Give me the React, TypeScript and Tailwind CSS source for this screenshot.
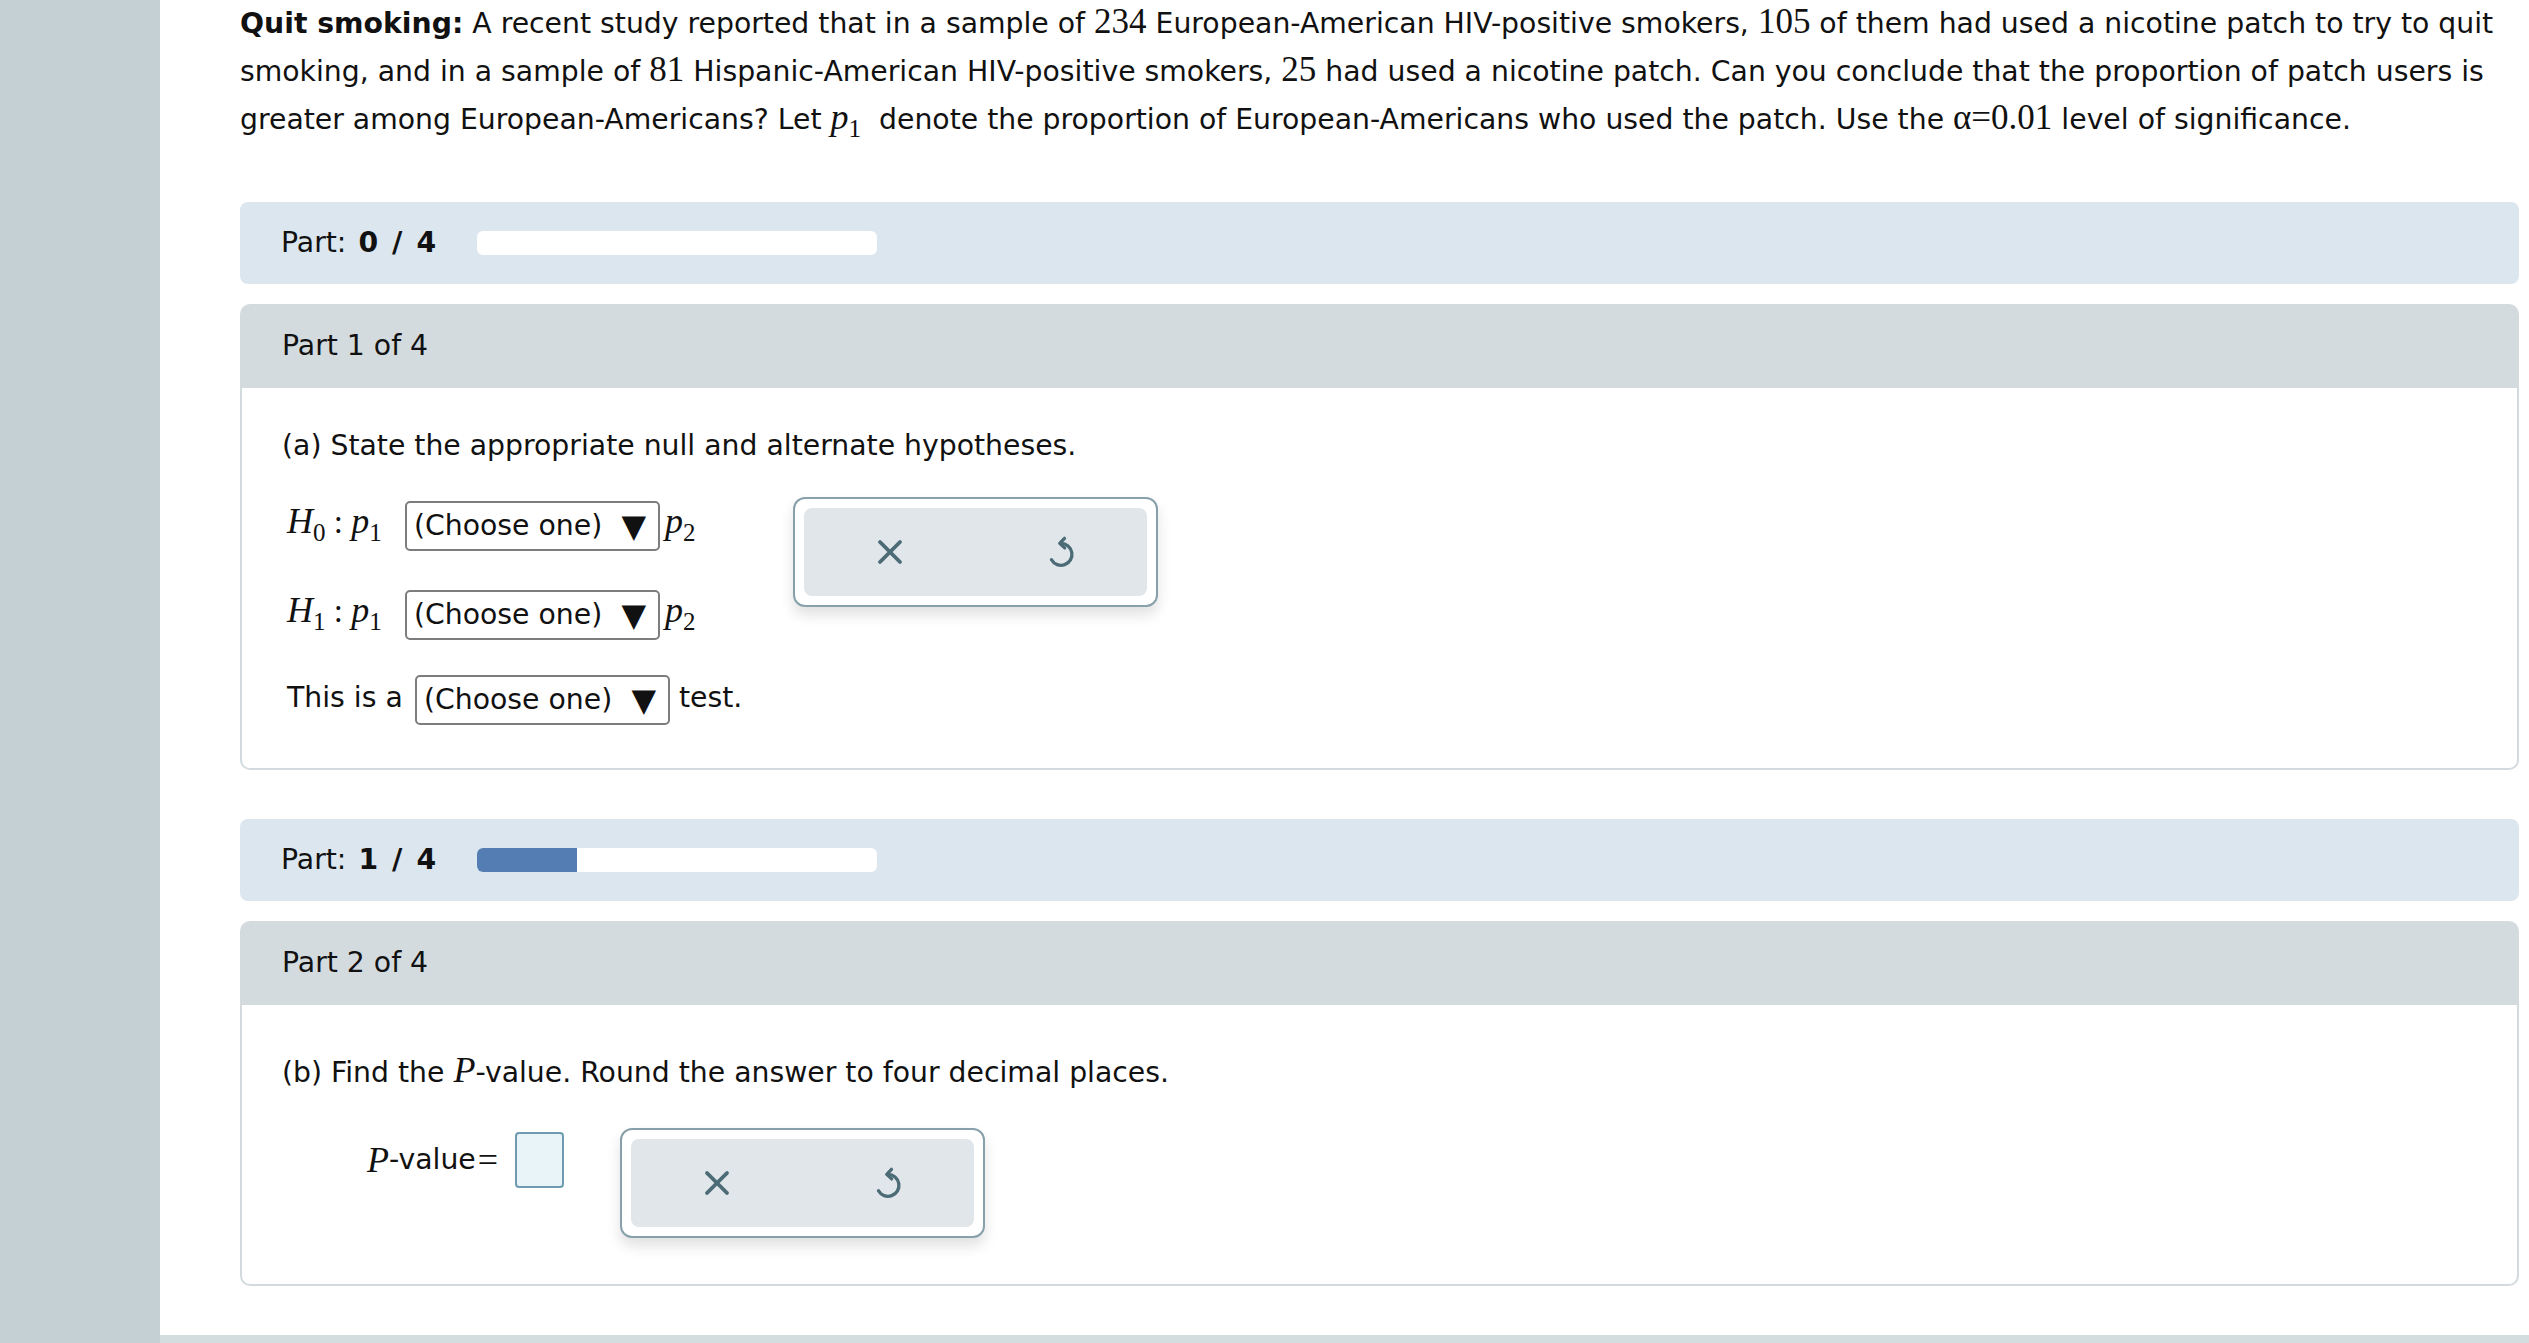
import React from "react";
import { X } from "lucide-react";

const M = ({ children }: { children: React.ReactNode }) => (
  <span className="font-['Liberation_Serif',serif] text-[35px] leading-none">{children}</span>
);

const MI = ({ children, sub }: { children: React.ReactNode; sub?: string }) => (
  <span className="font-['Liberation_Serif',serif] text-[36px] italic leading-none">
    {children}
    {sub && <span className="relative top-[8px] text-[25px] not-italic">{sub}</span>}
  </span>
);

const UndoIcon = () => (
  <svg width="38" height="38" viewBox="0 0 24 24" fill="none" stroke="#4b6b77" strokeWidth="2.1" strokeLinecap="round" strokeLinejoin="round">
    <path d="M12 6.6 A6.9 6.9 0 1 1 6 16.9" />
    <path d="M14.2 3.4 L11.2 6.5 L14.3 9.4" />
  </svg>
);

const CheckBox = () => (
  <div className="h-[110px] w-[365px] shrink-0 rounded-[12px] border-2 border-[#87a0a9] bg-white p-[9px] shadow-[0_8px_14px_rgba(0,0,0,0.12)]">
    <div className="flex h-full rounded-[8px] bg-[#e0e6e9]">
      <div className="flex flex-1 items-center justify-center">
        <X size={40} strokeWidth={2.3} color="#4b6b77" />
      </div>
      <div className="flex flex-1 items-center justify-center">
        <UndoIcon />
      </div>
    </div>
  </div>
);

const Select = () => (
  <div className="mt-[3px] flex h-[50px] w-[255px] shrink-0 items-center justify-between rounded-[5px] border-2 border-[#7d7d7d] bg-white pl-[7px] pr-[12px] leading-none">
    <span>(Choose one)</span>
    <span className="text-[32px]">▼</span>
  </div>
);

const PartBar = ({ n }: { n: number }) => (
  <div className="flex h-[82px] items-center rounded-[8px] bg-[#dce6ef] pl-[41px]">
    <div className="w-[196px]">
      Part:{" "}
      <span className="ml-[3px] font-bold">
        {n}
        <span className="mx-[14px]">/</span>4
      </span>
    </div>
    <div className="h-[24px] w-[400px] overflow-hidden rounded-[6px] bg-white">
      {n > 0 && <div className="h-full w-[100px] bg-[#547db4]" />}
    </div>
  </div>
);

const CardHeader = ({ label }: { label: string }) => (
  <div className="flex h-[84px] items-center rounded-t-[10px] bg-[#d3dbdf] pl-[42px]">{label}</div>
);

const Colon = () => (
  <span className="font-['Liberation_Serif',serif] text-[33px] leading-none">&nbsp;:&nbsp;</span>
);

export default function App() {
  return (
    <div className="flex h-[1343px] w-full overflow-hidden bg-white font-['DejaVu_Sans',Verdana,sans-serif] text-[28.3px] text-[#111]">
      <aside className="w-[160px] shrink-0 bg-[#c5d0d5]" />
      <main className="flex flex-1 flex-col">
        <div className="pl-[80px] pr-[10px]">
          <div className="whitespace-nowrap leading-[48px]">
            <div className="h-[48px]">
              <span className="font-bold">Quit smoking:</span> A recent study reported that in a sample of <M>234</M>{" "}
              European-American HIV-positive smokers, <M>105</M> of them had used a nicotine patch to try to quit
            </div>
            <div className="h-[48px]">
              smoking, and in a sample of <M>81</M> Hispanic-American HIV-positive smokers, <M>25</M> had used a nicotine
              patch. Can you conclude that the proportion of patch users is
            </div>
            <div className="h-[48px]">
              greater among European-Americans? Let <MI sub="1">p</MI>&nbsp; denote the proportion of European-Americans who
              used the patch. Use the <M>α=0.01</M> level of significance.
            </div>
          </div>

          <div className="mt-[58px]">
            <PartBar n={0} />
          </div>

          <div className="mt-[20px]">
            <CardHeader label="Part 1 of 4" />
            <div className="rounded-b-[10px] border-2 border-t-0 border-[#d3dbdf] bg-white pb-[43px] pl-[40px] pt-[34px]">
              <div className="h-[48px] leading-[48px]">(a) State the appropriate null and alternate hypotheses.</div>
              <div className="mt-[28px] flex items-start">
                <div className="w-[511px] shrink-0">
                  <div className="flex h-[53px] items-center">
                    <div className="w-[123px] pl-[5px]">
                      <MI sub="0">H</MI>
                      <Colon />
                      <MI sub="1">p</MI>
                    </div>
                    <Select />
                    <span className="ml-[5px]">
                      <MI sub="2">p</MI>
                    </span>
                  </div>
                  <div className="mt-[36px] flex h-[53px] items-center">
                    <div className="w-[123px] pl-[5px]">
                      <MI sub="1">H</MI>
                      <Colon />
                      <MI sub="1">p</MI>
                    </div>
                    <Select />
                    <span className="ml-[5px]">
                      <MI sub="2">p</MI>
                    </span>
                  </div>
                  <div className="mt-[32px] flex h-[53px] items-center">
                    <div className="w-[133px] pl-[5px]">This is a</div>
                    <Select />
                    <span className="ml-[9px]">test.</span>
                  </div>
                </div>
                <div className="-mt-[1px]">
                  <CheckBox />
                </div>
              </div>
            </div>
          </div>

          <div className="mt-[49px]">
            <PartBar n={1} />
          </div>

          <div className="mt-[20px]">
            <CardHeader label="Part 2 of 4" />
            <div className="rounded-b-[10px] border-2 border-t-0 border-[#d3dbdf] bg-white pb-[46px] pl-[40px] pt-[44px]">
              <div className="h-[48px] leading-[48px]">
                (b) Find the <MI>P</MI>-value. Round the answer to four decimal places.
              </div>
              <div className="mt-[31px] flex items-start">
                <div className="ml-[85px] mt-[4px] flex h-[56px] items-center">
                  <div className="flex w-[148px] items-center">
                    <MI>P</MI>
                    <span>-value</span>
                    <span className="ml-[2px] font-['Liberation_Serif',serif] text-[36px] leading-none">=</span>
                  </div>
                  <div className="h-[56px] w-[49px] rounded-[4px] border-2 border-[#6f9bb0] bg-[#e8f4f7]" />
                </div>
                <div className="ml-[56px]">
                  <CheckBox />
                </div>
              </div>
            </div>
          </div>
        </div>
        <div className="mt-auto h-[8px] bg-[#d3dcdf]" />
      </main>
    </div>
  );
}
